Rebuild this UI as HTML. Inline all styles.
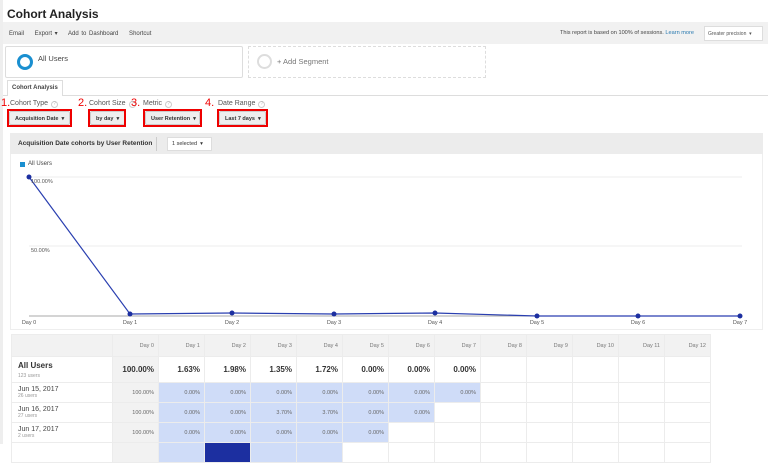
<!DOCTYPE html><html><head><style>
*{box-sizing:border-box;margin:0;padding:0}
body{width:768px;height:444px;overflow:hidden;background:#fff;font-family:"Liberation Sans",sans-serif;color:#333;position:relative;font-size:7px}
.a{position:absolute}
.dd{position:absolute;background:#eee;border:1px solid #ccc;border-radius:2px;font-size:5.5px;font-weight:bold;color:#333;padding:4px 5px;height:14px;line-height:6px;white-space:nowrap;overflow:hidden}
.rb{position:absolute;border:2px solid #e00}
.lbl{position:absolute;font-size:7px;color:#555;white-space:nowrap}
.num{position:absolute;color:#e00;font-size:11px}
.q{display:inline-block;width:7px;height:7px;border:1px solid #ccc;border-radius:50%;font-size:5px;color:#bbb;text-align:center;line-height:5px;margin-left:3px}
table{position:absolute;left:11px;top:334px;border-collapse:collapse;font-size:5.5px;color:#666}
td{border:1px solid #ececec;width:46px;text-align:right;padding-right:4px;white-space:nowrap}
td:first-child{width:101px;text-align:left;padding-left:6px}
.h td{height:22px;background:#f2f2f2;color:#777}
.t td{height:26px;font-size:8px;font-weight:bold;color:#333}
.r td{height:20px}
.b{background:#cfdcf8}
.g{background:#f2f2f2}
</style></head><body>
<div class="a" style="left:0;top:0;width:3px;height:444px;background:#eee"></div>
<div class="a" style="left:7px;top:7px;font-size:12px;font-weight:bold;color:#222">Cohort Analysis</div>
<div class="a" style="left:3px;top:22px;width:765px;height:22px;background:#f1f1f1"></div>
<div class="a" style="left:9px;top:30px;font-size:6px;color:#444;word-spacing:1px">Email &nbsp;&nbsp; Export ▾ &nbsp;&nbsp; Add to Dashboard &nbsp;&nbsp; Shortcut</div>
<div class="a" style="left:560px;top:30px;font-size:5.6px;color:#444;white-space:nowrap">This report is based on 100% of sessions. <span style="color:#2a7ab0">Learn more</span></div>
<div class="a" style="left:704px;top:26px;width:59px;height:15px;background:#fff;border:1px solid #ddd;font-size:5px;padding:4px 3px;color:#555;white-space:nowrap">Greater precision &nbsp;▾</div>
<div class="a" style="left:5px;top:46px;width:238px;height:32px;border:1px solid #ddd;border-radius:2px"></div>
<div class="a" style="left:17px;top:54px;width:16px;height:16px;border:3px solid #1a8fd0;border-radius:50%"></div>
<div class="a" style="left:38px;top:54px;font-size:7.5px;color:#444">All Users</div>
<div class="a" style="left:248px;top:46px;width:238px;height:32px;border:1px dashed #ddd"></div>
<div class="a" style="left:257px;top:54px;width:15px;height:15px;border:2px solid #ddd;border-radius:50%"></div>
<div class="a" style="left:277px;top:57px;font-size:7.5px;color:#777">+ Add Segment</div>
<div class="a" style="left:3px;top:95px;width:765px;height:1px;background:#ddd"></div>
<div class="a" style="left:7px;top:80px;width:56px;height:16px;border:1px solid #ddd;border-bottom:none;background:#fff;font-size:6px;font-weight:bold;padding:4px 4px;color:#444;white-space:nowrap">Cohort Analysis</div>
<div class="num" style="left:1px;top:97px">1.</div><div class="lbl" style="left:10px;top:100px">Cohort Type<span class="q">?</span></div>
<div class="num" style="left:78px;top:97px">2.</div><div class="lbl" style="left:89px;top:100px">Cohort Size<span class="q">?</span></div>
<div class="num" style="left:131px;top:97px">3.</div><div class="lbl" style="left:143px;top:100px">Metric<span class="q">?</span></div>
<div class="num" style="left:205px;top:97px">4.</div><div class="lbl" style="left:218px;top:100px">Date Range<span class="q">?</span></div>
<div class="dd" style="left:9px;top:111px;width:61px">Acquisition Date &nbsp;▾</div><div class="rb" style="left:7px;top:109px;width:65px;height:18px"></div>
<div class="dd" style="left:90px;top:111px;width:35px">by day &nbsp;▾</div><div class="rb" style="left:88px;top:109px;width:38px;height:18px"></div>
<div class="dd" style="left:145px;top:111px;width:55px">User Retention &nbsp;▾</div><div class="rb" style="left:143px;top:109px;width:59px;height:18px"></div>
<div class="dd" style="left:219px;top:111px;width:47px">Last 7 days &nbsp;▾</div><div class="rb" style="left:217px;top:109px;width:51px;height:18px"></div>
<div class="a" style="left:10px;top:133px;width:753px;height:21px;background:#ececec"></div>
<div class="a" style="left:10px;top:154px;width:753px;height:176px;border:1px solid #eee;border-top:none"></div>
<div class="a" style="left:18px;top:140px;font-size:6.5px;font-weight:bold;color:#333;white-space:nowrap">Acquisition Date cohorts by User Retention</div>
<div class="a" style="left:156px;top:137px;width:1px;height:14px;background:#ccc"></div>
<div class="a" style="left:167px;top:137px;width:45px;height:14px;background:#fff;border:1px solid #ddd;font-size:5.5px;padding:3px 4px;white-space:nowrap">1 selected &nbsp;▾</div>
<div class="a" style="left:20px;top:162px;width:5px;height:5px;background:#1a8fd0"></div>
<div class="a" style="left:28px;top:161px;font-size:6px;color:#444">All Users</div>
<svg class="a" style="left:0;top:0" width="768" height="444">
<line x1="29" y1="177" x2="742" y2="177" stroke="#eee"/>
<line x1="29" y1="246" x2="742" y2="246" stroke="#eee"/>
<line x1="29" y1="316" x2="742" y2="316" stroke="#aaa"/>
<polyline fill="none" stroke="#2a3fb0" stroke-width="1.2" points="29,177 130,314 232,313 334,314 435,313 537,316 638,316 740,316"/>
<g fill="#1c2fa0"><circle cx="29" cy="177" r="2.5"/><circle cx="130" cy="314" r="2.5"/><circle cx="232" cy="313" r="2.5"/><circle cx="334" cy="314" r="2.5"/><circle cx="435" cy="313" r="2.5"/><circle cx="537" cy="316" r="2.5"/><circle cx="638" cy="316" r="2.5"/><circle cx="740" cy="316" r="2.5"/></g>
<g font-size="5.5" fill="#555" font-family="Liberation Sans"><text x="31" y="183">100.00%</text><text x="31" y="252">50.00%</text>
<g text-anchor="middle"><text x="29" y="324">Day 0</text><text x="130" y="324">Day 1</text><text x="232" y="324">Day 2</text><text x="334" y="324">Day 3</text><text x="435" y="324">Day 4</text><text x="537" y="324">Day 5</text><text x="638" y="324">Day 6</text><text x="740" y="324">Day 7</text></g></g>
</svg>
<table>
<tr class="h"><td></td><td>Day 0</td><td>Day 1</td><td>Day 2</td><td>Day 3</td><td>Day 4</td><td>Day 5</td><td>Day 6</td><td>Day 7</td><td>Day 8</td><td>Day 9</td><td>Day 10</td><td>Day 11</td><td>Day 12</td></tr>
<tr class="t"><td>All Users<br><span style="font-size:5px;color:#999;font-weight:normal">123 users</span></td><td class="g">100.00%</td><td>1.63%</td><td>1.98%</td><td>1.35%</td><td>1.72%</td><td>0.00%</td><td>0.00%</td><td>0.00%</td><td></td><td></td><td></td><td></td><td></td></tr>
<tr class="r"><td><span style="font-size:7px;color:#444">Jun 15, 2017</span><br><span style="font-size:5px;color:#999">26 users</span></td><td class="g">100.00%</td><td class="b">0.00%</td><td class="b">0.00%</td><td class="b">0.00%</td><td class="b">0.00%</td><td class="b">0.00%</td><td class="b">0.00%</td><td class="b">0.00%</td><td></td><td></td><td></td><td></td><td></td></tr>
<tr class="r"><td><span style="font-size:7px;color:#444">Jun 16, 2017</span><br><span style="font-size:5px;color:#999">27 users</span></td><td class="g">100.00%</td><td class="b">0.00%</td><td class="b">0.00%</td><td class="b">3.70%</td><td class="b">3.70%</td><td class="b">0.00%</td><td class="b">0.00%</td><td></td><td></td><td></td><td></td><td></td><td></td></tr>
<tr class="r"><td><span style="font-size:7px;color:#444">Jun 17, 2017</span><br><span style="font-size:5px;color:#999">2 users</span></td><td class="g">100.00%</td><td class="b">0.00%</td><td class="b">0.00%</td><td class="b">0.00%</td><td class="b">0.00%</td><td class="b">0.00%</td><td></td><td></td><td></td><td></td><td></td><td></td><td></td></tr>
<tr class="r"><td></td><td class="g"></td><td class="b"></td><td style="background:#1c2fa0"></td><td class="b"></td><td class="b"></td><td></td><td></td><td></td><td></td><td></td><td></td><td></td><td></td></tr>
</table>
</body></html>
